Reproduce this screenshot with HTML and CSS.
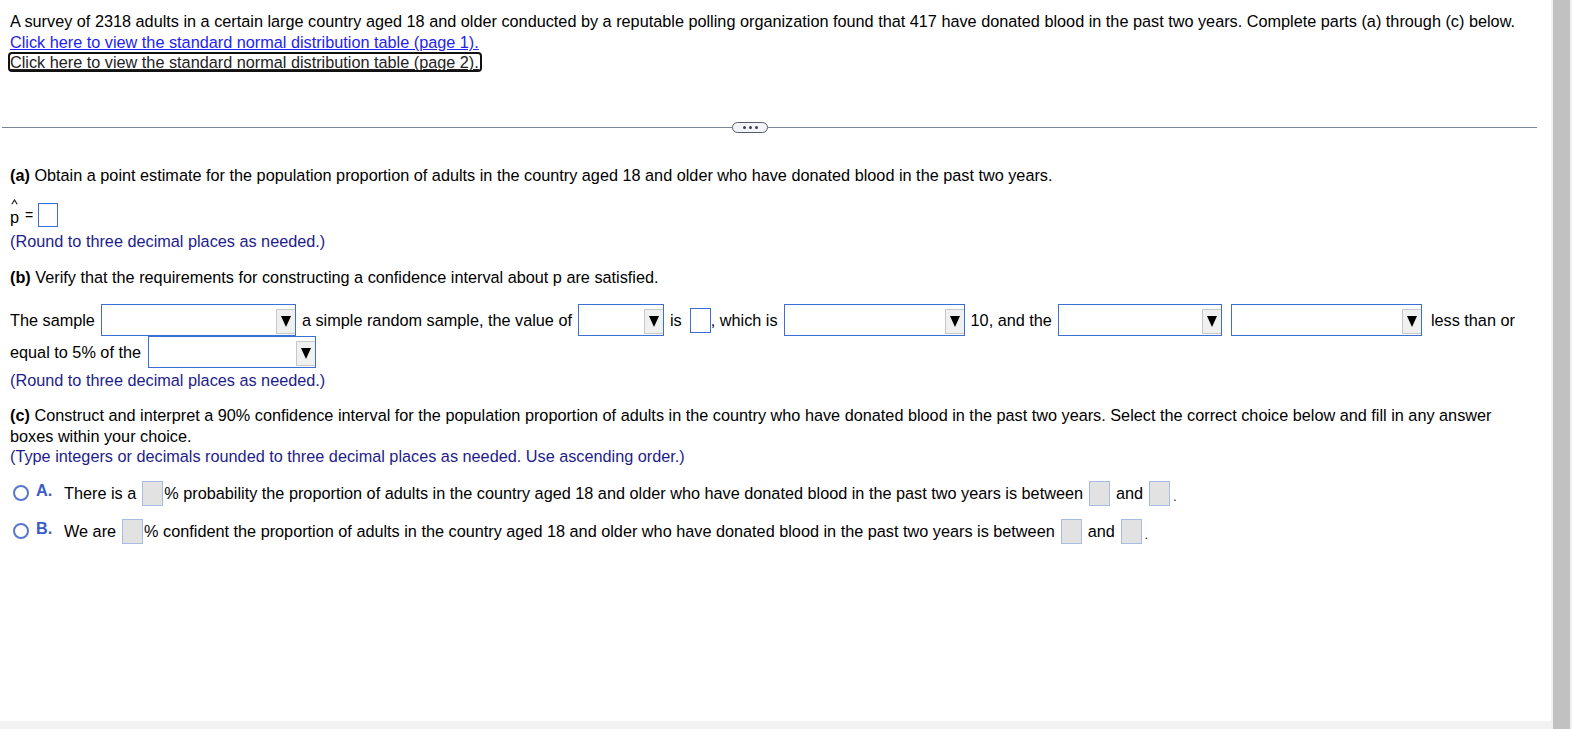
FILE: index.html
```html
<!DOCTYPE html>
<html>
<head>
<meta charset="utf-8">
<link rel="stylesheet" href="styles.css">
</head>
<body>
<div class="viewport">
  <div class="main">
    <div class="intro">
      <div class="line first">A survey of 2318 adults in a certain large country aged 18 and older conducted by a reputable polling organization found that 417 have donated blood in the past two years. Complete parts (a) through (c) below.</div>
      <div class="line"><a class="link" href="#">Click here to view the standard normal distribution table (page 1).</a></div>
      <div class="line"><a class="link focused" href="#">Click here to view the standard normal distribution table (page 2).</a></div>
    </div>
    <div class="divider">
      <span class="rule-left"></span>
      <span class="pill"><i></i><i></i><i></i></span>
      <span class="rule-right"></span>
    </div>
    <div class="question">
      <div class="line part-a"><b>(a)</b> Obtain a point estimate for the population proportion of adults in the country aged 18 and older who have donated blood in the past two years.</div>
      <div class="phat-row"><span class="phat"><svg class="hat" width="7" height="6" viewBox="0 0 7 6"><path d="M0.8 5.2 L3.5 1 L6.2 5.2" fill="none" stroke="#222" stroke-width="1.2"/></svg>p</span><span class="eq">=</span><span class="ansbox"></span></div>
      <div class="line note">(Round to three decimal places as needed.)</div>

      <div class="line part-b"><b>(b)</b> Verify that the requirements for constructing a confidence interval about p are satisfied.</div>
      <div class="flowrow row1">
        <span>The sample</span>
        <span class="select w194"><span class="btn"><i class="tri"></i></span></span>
        <span>a simple random sample, the value of</span>
        <span class="select w85"><span class="btn"><i class="tri"></i></span></span>
        <span>is</span>
        <span class="ansbox small"></span><span class="tight">, which is</span>
        <span class="select w180"><span class="btn"><i class="tri"></i></span></span>
        <span>10, and the</span>
        <span class="select w163"><span class="btn"><i class="tri"></i></span></span>
        <span class="select w190 extra"><span class="btn"><i class="tri"></i></span></span>
        <span class="extra">less than or</span>
      </div>
      <div class="flowrow row2">
        <span>equal to 5% of the</span>
        <span class="select w167"><span class="btn"><i class="tri"></i></span></span>
      </div>
      <div class="line note">(Round to three decimal places as needed.)</div>

      <div class="line part-c">
        <b>(c)</b> Construct and interpret a 90% confidence interval for the population proportion of adults in the country who have donated blood in the past two years. Select the correct choice below and fill in any answer</div>
      <div class="line wrap2">boxes within your choice.</div>
      <div class="line note">(Type integers or decimals rounded to three decimal places as needed. Use ascending order.)</div>

      <div class="choice choice-a">
        <span class="radio"></span>
        <span class="letter">A.</span>
        <span class="ctext">There is a</span><span class="graybox"></span><span class="after">% probability the proportion of adults in the country aged 18 and older who have donated blood in the past two years is between</span><span class="graybox"></span><span>and</span><span class="graybox"></span><span class="dot">.</span>
      </div>
      <div class="choice choice-b">
        <span class="radio"></span>
        <span class="letter">B.</span>
        <span class="ctext">We are</span><span class="graybox"></span><span class="after">% confident the proportion of adults in the country aged 18 and older who have donated blood in the past two years is between</span><span class="graybox"></span><span>and</span><span class="graybox"></span><span class="dot">.</span>
      </div>
    </div>
  </div>
  <div class="vscroll"><div class="thumb"></div></div>
  <div class="hscroll"></div>
</div>
</body>
</html>
```

FILE: styles.css
```css
html, body {
  margin: 0;
  padding: 0;
  height: 100%;
  overflow: hidden;
  background: #ffffff;
}
body {
  font-family: "Liberation Sans", Arial, sans-serif;
  font-size: 16.25px;
  color: #000000;
}
.viewport {
  display: grid;
  grid-template-columns: 1fr 21px;
  grid-template-rows: 1fr 8px;
  width: 1572px;
  height: 729px;
}
.main {
  overflow: hidden;
  padding-top: 11px;
}
.vscroll {
  grid-row: 1 / 3;
  grid-column: 2;
  background: #f0f0f0;
  padding: 0 2px;
  display: flex;
}
.thumb {
  flex: 1;
  background: #c1c1c1;
}
.hscroll {
  background: #f2f2f2;
}

.line {
  line-height: 20px;
  white-space: nowrap;
}
.first { margin-bottom: 1px; }
.intro { padding-left: 10px; }
.link {
  color: #2323f0;
  text-decoration: underline;
}
.focused {
  color: #222;
  outline: 2px solid #111;
  outline-offset: -1px;
  border-radius: 3px;
  padding: 0 2px 0 1px;
  margin-left: -1px;
}

.divider {
  display: flex;
  align-items: center;
  margin: 49px 0 0 2px;
  width: 1535px;
  height: 12px;
}
.rule-left {
  width: 730px;
  height: 1px;
  background: #7b8698;
}
.rule-right {
  flex: 1;
  height: 1px;
  background: #7b8698;
}
.pill {
  width: 34px;
  height: 9px;
  border: 1px solid #555c6a;
  border-radius: 6px;
  background: #f4f5f9;
  display: flex;
  align-items: center;
  justify-content: center;
  gap: 3px;
}
.pill i {
  width: 3px;
  height: 3px;
  background: #3c4250;
  border-radius: 50%;
}

.question { padding-left: 10px; }
.part-a { margin-top: 32px; }
.note { color: #1d1d8a; }

.phat-row {
  display: flex;
  align-items: center;
  height: 24px;
  margin-top: 18px;
}
.phat {
  position: relative;
  line-height: 20px;
  margin-top: 4px;
}
.hat {
  position: absolute;
  left: 1px;
  top: -8px;
}
.eq { margin: 0 5px 0 6px; font-size: 14px; }
.ansbox {
  display: inline-block;
  width: 18px;
  height: 22px;
  border: 1px solid #3b6fd6;
  background: #fff;
}
.ansbox.small {
  width: 19px;
  height: 23px;
  margin-left: 2px;
}
.phat-row + .note { margin-top: 4px; }

.part-b { margin-top: 16px; }
.flowrow {
  display: flex;
  align-items: center;
  height: 32px;
  white-space: nowrap;
}
.row1 { margin-top: 17px; gap: 6px; }
.row1 .tight { margin-left: -6px; }
.row1 .extra { margin-left: 3px; }
.row2 { gap: 7px; }
.row2 + .note { margin-top: 2px; }
.select {
  display: inline-flex;
  justify-content: flex-end;
  align-items: flex-end;
  border: 1px solid #3b6fd6;
  background: #fff;
  box-sizing: border-box;
  height: 32px;
  padding-bottom: 1px;
}
.select .btn {
  width: 19px;
  height: 25px;
  background: #f0f0f0;
  border: 1px solid #c8c8c8;
  border-right: none;
  display: flex;
  align-items: center;
  justify-content: center;
  box-sizing: border-box;
}
.tri {
  width: 0;
  height: 0;
  border-left: 5px solid transparent;
  border-right: 5px solid transparent;
  border-top: 11px solid #000;
}
.w194 { width: 195px; }
.w85 { width: 86px; }
.w180 { width: 181px; }
.w163 { width: 164px; }
.w190 { width: 191px; }
.w167 { width: 168px; }

.part-c { margin-top: 15px; line-height: 21px; }

.choice {
  display: flex;
  align-items: center;
  height: 26px;
  white-space: nowrap;
}
.choice-a { margin-top: 14px; }
.choice-b { margin-top: 12px; }
.radio {
  width: 12px;
  height: 12px;
  border: 2px solid #5876d0;
  border-radius: 50%;
  margin-left: 3px;
  background: #fff;
}
.letter {
  font-weight: bold;
  color: #3a5cc4;
  margin-left: 7px;
  width: 28px;
  position: relative;
  top: -3px;
}
.graybox {
  display: inline-block;
  width: 19px;
  height: 23px;
  background: #e2e2e2;
  border: 1px solid #a8bbe3;
  margin: 0 6px;
}
.choice .after { margin-left: -5px; }
.dot { margin-left: -3px; font-size: 12px; margin-top: 8px; }
```
